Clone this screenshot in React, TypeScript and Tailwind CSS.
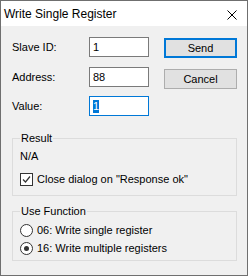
import React from "react";

function Field({ label, value, focused, className = "" }: { label: string; value: string; focused?: boolean; className?: string }) {
  return (
    <div className={`flex items-center h-[20px] ${className}`}>
      <span className="w-[77px] text-[11px]">{label}</span>
      <div
        className={`w-[60px] h-[20px] bg-white flex items-center pl-[3px] border ${
          focused ? "border-[#0078d7]" : "border-[#7a7a7a]"
        }`}
      >
        {focused ? (
          <span className="bg-[#0078d7] text-white text-[11px] leading-[13px] h-[13px]">{value}</span>
        ) : (
          <span className="text-[11px]">{value}</span>
        )}
      </div>
    </div>
  );
}

function Group({ title, className = "", children }: { title: string; className?: string; children: React.ReactNode }) {
  return (
    <div className={`relative border border-[#dcdcdc] pl-[7px] ${className}`}>
      <span className="absolute -top-[7px] left-[7px] bg-[#f0f0f0] px-[1px] text-[11px] leading-[13px]">{title}</span>
      {children}
    </div>
  );
}

function Radio({ checked, label, className = "" }: { checked?: boolean; label: string; className?: string }) {
  return (
    <div className={`flex items-center h-[13px] gap-[4px] ${className}`}>
      <span className="w-[13px] h-[13px] rounded-full border border-[#333333] bg-white flex items-center justify-center">
        {checked && <span className="w-[5px] h-[5px] rounded-full bg-[#333333]" />}
      </span>
      <span className="text-[11px] leading-[13px]">{label}</span>
    </div>
  );
}

export default function App() {
  return (
    <div className="w-[248px] h-[276px] border border-[#6f6f6f] bg-[#f0f0f0] flex flex-col text-black font-['Liberation_Sans',Arial,sans-serif]">
      {/* Title bar */}
      <div className="h-[25px] bg-white flex items-center justify-between pl-[3px] pr-[10px] shrink-0">
        <span className="text-[12px]">Write Single Register</span>
        <svg width="10" height="10" viewBox="0 0 10 10" className="mt-[2px]">
          <path d="M0.5 0.5L9.5 9.5M9.5 0.5L0.5 9.5" stroke="#000" strokeWidth="1" />
        </svg>
      </div>

      <div className="flex flex-col pl-[11px]">
        <div className="flex pt-[11px]">
          <div className="flex flex-col">
            <Field label="Slave ID:" value="1" />
            <Field label="Address:" value="88" className="mt-[10px]" />
            <Field label="Value:" value="1" focused className="mt-[9px]" />
          </div>
          <div className="flex flex-col ml-[15px] pt-[1px]">
            <button className="w-[73px] h-[20px] bg-[#e1e1e1] border-2 border-[#0078d7] text-[11px] flex items-center justify-center">
              Send
            </button>
            <button className="w-[73px] h-[20px] bg-[#e1e1e1] border border-[#adadad] text-[11px] flex items-center justify-center mt-[11px]">
              Cancel
            </button>
          </div>
        </div>

        <Group title="Result" className="w-[225px] h-[58px] mt-[22px]">
          <div className="pt-[11px] h-[24px] text-[11px] leading-[13px]">N/A</div>
          <div className="flex items-center h-[13px] gap-[4px] mt-[10px]">
            <span className="w-[13px] h-[13px] border border-[#333333] bg-white flex items-center justify-center">
              <svg width="9" height="9" viewBox="0 0 9 9">
                <path d="M1 4.5L3.5 7L8 1.5" stroke="#333333" strokeWidth="1.2" fill="none" />
              </svg>
            </span>
            <span className="text-[11px] leading-[13px]">Close dialog on "Response ok"</span>
          </div>
        </Group>

        <Group title="Use Function" className="w-[225px] h-[50px] mt-[15px] pt-[12px]">
          <Radio label="06: Write single register" />
          <Radio label="16: Write multiple registers" checked className="mt-[5px]" />
        </Group>
      </div>
    </div>
  );
}
